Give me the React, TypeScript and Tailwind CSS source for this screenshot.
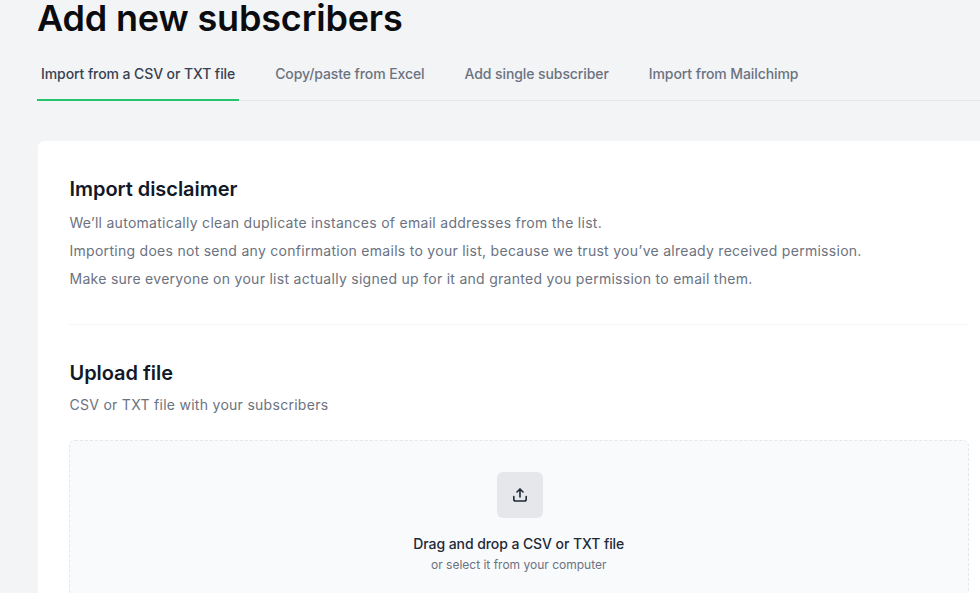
function UploadIcon() {
  return (
    <svg width="16" height="16" viewBox="0 0 16 16" fill="none" stroke="#1f2937" strokeWidth="1.6" strokeLinecap="round" strokeLinejoin="round">
      <path d="M8 10V2.2" />
      <path d="M5 5L8 2l3 3" />
      <path d="M1.8 9.5v2.7c0 1 .8 1.8 1.8 1.8h8.8c1 0 1.8-.8 1.8-1.8V9.5" />
    </svg>
  )
}

const tabs = ["Import from a CSV or TXT file", "Copy/paste from Excel", "Add single subscriber", "Import from Mailchimp"]

const disclaimers = [
  "We’ll automatically clean duplicate instances of email addresses from the list.",
  "Importing does not send any confirmation emails to your list, because we trust you’ve already received permission.",
  "Make sure everyone on your list actually signed up for it and granted you permission to email them.",
]

export default function App() {
  return (
    <div className="h-[593px] w-[980px] overflow-hidden bg-[#f3f4f6] pl-[37px] font-['Inter',sans-serif]">
      <h1 className="-mt-[4px] h-[44px] text-[36px] leading-[44px] font-semibold tracking-[-0.16px] text-[#0b0c0f]">Add new subscribers</h1>

      <div className="mt-[14px] flex h-[47px] w-[943px] gap-8 border-b border-[#e5e7eb]">
        {tabs.map((tab, i) => (
          <div
            key={tab}
            className={
              i === 0
                ? "h-[47px] border-b-2 border-[#22c56e] px-1 pt-[9.5px] text-[14px] leading-[20px] font-medium tracking-[-0.09px] text-[#374151]"
                : "h-[47px] px-1 pt-[9.5px] text-[14px] leading-[20px] font-medium tracking-[-0.09px] text-[#6b7280]"
            }
          >
            {tab}
          </div>
        ))}
      </div>

      <div className="mt-[40px] ml-[0.5px] w-[963.5px] rounded-md bg-white p-8">
        <h2 className="text-[20px] leading-[32px] font-semibold tracking-[-0.05px] text-[#111827]">Import disclaimer</h2>
        <div className="mt-[4px] text-[14px] leading-[28px] tracking-[0.28px] text-[#6b7280]">
          {disclaimers.map((line) => (
            <p key={line}>{line}</p>
          ))}
        </div>

        <div className="mt-[31px] -ml-[1px] border-t border-[#f3f4f6]" />

        <h2 className="mt-[32px] text-[20px] leading-[32px] font-semibold tracking-[-0.05px] text-[#111827]">Upload file</h2>
        <p className="mt-[6px] text-[14px] leading-[20px] tracking-[0.28px] text-[#6b7280]">CSV or TXT file with your subscribers</p>

        <div className="mt-[25px] -ml-[1px] flex h-[200px] flex-col items-center rounded-md border border-dashed border-[#e5e7eb] bg-[#f9fafb] pt-[31px]">
          <div className="ml-[2px] flex h-[46px] w-[46px] items-center justify-center rounded-md bg-[#e5e7eb]">
            <UploadIcon />
          </div>
          <p className="mt-[16px] text-[14px] leading-[20px] font-medium tracking-[-0.08px] text-[#1f2937]">Drag and drop a CSV or TXT file</p>
          <p className="mt-[3px] text-[12px] leading-[16px] text-[#6b7280]">or select it from your computer</p>
        </div>
      </div>
    </div>
  )
}
